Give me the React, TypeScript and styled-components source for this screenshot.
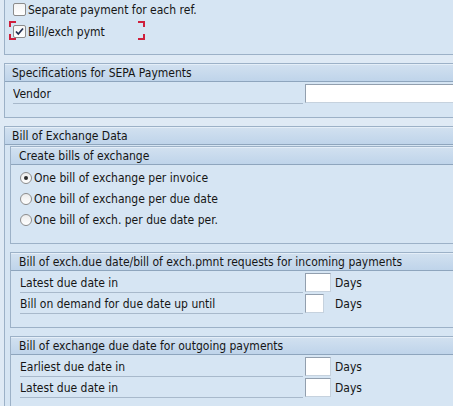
import React from "react";
import styled, { createGlobalStyle } from "styled-components";

const GlobalStyle = createGlobalStyle`
  html, body {
    margin: 0;
    padding: 0;
    background: #dfeaf5;
    overflow: hidden;
  }
  body {
    font-family: "DejaVu Sans Condensed", "Liberation Sans", Arial, sans-serif;
    font-size: 12px;
    color: #151515;
  }
`;

const Screen = styled.div`
  width: 453px;
  height: 406px;
  overflow: hidden;
  box-sizing: border-box;
  padding-left: 4px;
  display: flex;
  flex-direction: column;
`;

const Group = styled.div<{ $inner?: boolean; $clipped?: boolean }>`
  flex: none;
  box-sizing: border-box;
  width: ${(p) => (p.$inner ? "470px" : "480px")};
  margin: 0 0 8px ${(p) => (p.$inner ? 5 : 0)}px;
  border: 1px solid #9cb1c7;
  border-top: ${(p) => (p.$clipped ? "none" : "1px solid #9cb1c7")};
  background: #d6e5f3;
`;

const GroupTitle = styled.div<{ $indent: number }>`
  height: 17px;
  line-height: 19px;
  overflow: hidden;
  padding-left: ${(p) => p.$indent}px;
  background: linear-gradient(#d2e1f0, #bfd4ea);
  border-bottom: 1px solid #8ea5bd;
  box-shadow: inset 0 1px 0 #e4eef8;
  white-space: nowrap;
`;

const GroupBody = styled.div<{ $pt: number; $pb: number; $pl: number }>`
  display: flex;
  flex-direction: column;
  padding: ${(p) => p.$pt}px 0 ${(p) => p.$pb}px ${(p) => p.$pl}px;
`;

const Row = styled.div<{ $lift?: number }>`
  box-sizing: border-box;
  height: 21px;
  margin-top: ${(p) => -(p.$lift ?? 0)}px;
  padding-top: 2px;
  display: flex;
  align-items: center;
  white-space: nowrap;
`;

const FocusFrame = styled.div`
  box-sizing: border-box;
  width: 136px;
  height: 19px;
  margin: 2px 0 0 -4px;
  padding: 2px 0 0 4px;
  display: flex;
  align-items: center;
  white-space: nowrap;
  --c: #cf1f3c;
  background:
    linear-gradient(var(--c), var(--c)) left top / 7px 2px no-repeat,
    linear-gradient(var(--c), var(--c)) left top / 2px 6px no-repeat,
    linear-gradient(var(--c), var(--c)) right top / 7px 2px no-repeat,
    linear-gradient(var(--c), var(--c)) right top / 2px 6px no-repeat,
    linear-gradient(var(--c), var(--c)) left bottom / 7px 2px no-repeat,
    linear-gradient(var(--c), var(--c)) left bottom / 2px 6px no-repeat,
    linear-gradient(var(--c), var(--c)) right bottom / 7px 2px no-repeat,
    linear-gradient(var(--c), var(--c)) right bottom / 2px 6px no-repeat;
`;

const Box = styled.span`
  flex: none;
  box-sizing: border-box;
  width: 13px;
  height: 13px;
  margin-right: 2px;
  border: 1px solid #8c8c8c;
  border-radius: 2px;
  background: linear-gradient(#f4f4f4, #ffffff);
  display: flex;
  align-items: center;
  justify-content: center;
`;

const Radio = styled.span<{ $on?: boolean }>`
  flex: none;
  box-sizing: border-box;
  width: 12px;
  height: 12px;
  margin-right: 2px;
  border: 1px solid #8c8c8c;
  border-radius: 50%;
  background: linear-gradient(#ececec, #ffffff);
  display: flex;
  align-items: center;
  justify-content: center;

  &::after {
    content: "";
    width: 4px;
    height: 4px;
    border-radius: 50%;
    background: ${(p) => (p.$on ? "#2b2b2b" : "transparent")};
  }
`;

const FieldRow = styled.div`
  height: 21px;
  display: flex;
  align-items: center;
  white-space: nowrap;
`;

const FieldLabel = styled.span<{ $width: number }>`
  flex: none;
  box-sizing: border-box;
  width: ${(p) => p.$width}px;
  height: 21px;
  line-height: 22px;
  margin-right: 2px;
  border-bottom: 1px solid #a8b9cb;
  overflow: hidden;
`;

const InputSlot = styled.span`
  flex: none;
  width: 30px;
  display: flex;
`;

const TextBox = styled.span<{ $width: number }>`
  flex: none;
  box-sizing: border-box;
  display: block;
  width: ${(p) => p.$width}px;
  height: 19px;
  background: #fff;
  border: 1px solid;
  border-color: #929fae #c6d2de #c6d2de #929fae;
`;

const Unit = styled.span`
  height: 21px;
  line-height: 23px;
`;

const Check = () => (
  <svg width="11" height="11" viewBox="0 0 11 11">
    <path d="M2 5.5 L4.3 8 L9 2.5" fill="none" stroke="#1e2d4f" strokeWidth="1.7" />
  </svg>
);

const DaysField = ({ label, width }: { label: string; width: number }) => (
  <FieldRow>
    <FieldLabel $width={283}>{label}</FieldLabel>
    <InputSlot>
      <TextBox $width={width} />
    </InputSlot>
    <Unit>Days</Unit>
  </FieldRow>
);

export default function App() {
  return (
    <>
      <GlobalStyle />
      <Screen>
        <Group $clipped>
          <GroupBody $pt={0} $pb={14} $pl={8}>
            <Row $lift={2}>
              <Box />
              Separate payment for each ref.
            </Row>
            <FocusFrame>
              <Box>
                <Check />
              </Box>
              Bill/exch pymt
            </FocusFrame>
          </GroupBody>
        </Group>

        <Group>
          <GroupTitle $indent={7}>Specifications for SEPA Payments</GroupTitle>
          <GroupBody $pt={1} $pb={13} $pl={8}>
            <FieldRow>
              <FieldLabel $width={290}>Vendor</FieldLabel>
              <TextBox $width={160} />
            </FieldRow>
          </GroupBody>
        </Group>

        <Group>
          <GroupTitle $indent={7}>Bill of Exchange Data</GroupTitle>
          <GroupBody $pt={1} $pb={0} $pl={0}>
            <Group $inner>
              <GroupTitle $indent={8}>Create bills of exchange</GroupTitle>
              <GroupBody $pt={1} $pb={14} $pl={9}>
                <Row>
                  <Radio $on />
                  One bill of exchange per invoice
                </Row>
                <Row>
                  <Radio />
                  One bill of exchange per due date
                </Row>
                <Row>
                  <Radio />
                  One bill of exch. per due date per.
                </Row>
              </GroupBody>
            </Group>

            <Group $inner>
              <GroupTitle $indent={8}>
                Bill of exch.due date/bill of exch.pmnt requests for incoming payments
              </GroupTitle>
              <GroupBody $pt={1} $pb={13} $pl={9}>
                <DaysField label="Latest due date in" width={26} />
                <DaysField label="Bill on demand for due date up until" width={19} />
              </GroupBody>
            </Group>

            <Group $inner>
              <GroupTitle $indent={8}>Bill of exchange due date for outgoing payments</GroupTitle>
              <GroupBody $pt={1} $pb={13} $pl={9}>
                <DaysField label="Earliest due date in" width={26} />
                <DaysField label="Latest due date in" width={26} />
              </GroupBody>
            </Group>
          </GroupBody>
        </Group>
      </Screen>
    </>
  );
}
